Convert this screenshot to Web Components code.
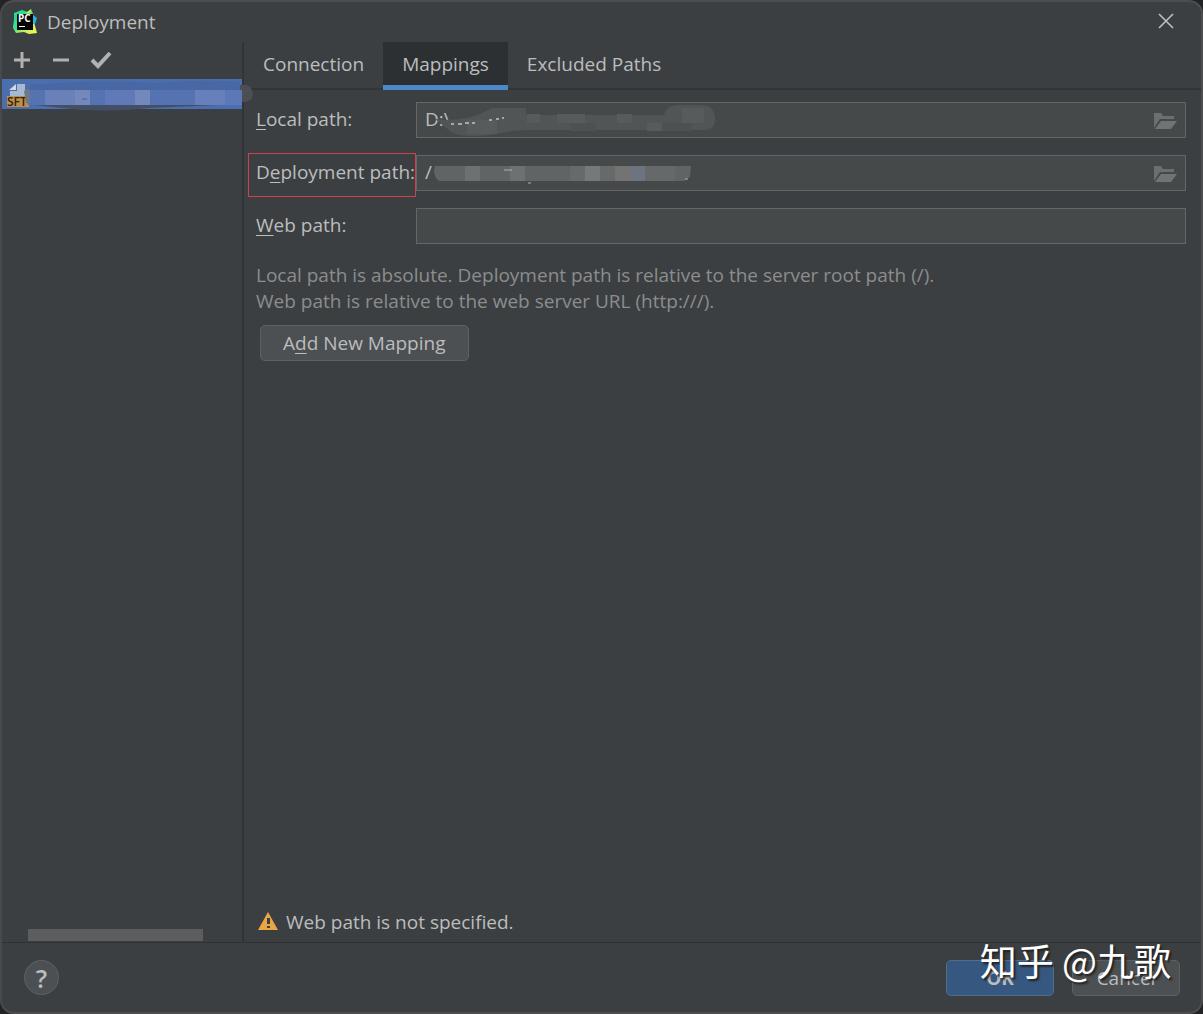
<!DOCTYPE html>
<html lang="en">
<head>
<meta charset="utf-8">
<title>Deployment</title>
<style>
    html, body {
        margin: 0;
        height: 100%;
    }
    body {
        --bg: #3c3f41;
        --line: #323537;
        --text: #bbbdbe;
        --field: #45494a;
        --field-border: #646768;
        background: #222324;
        color: var(--text);
        font: 19px/26px "Open Sans", "Noto Sans", "Noto Sans CJK SC", sans-serif;
    }
</style>
</head>
<body>
<dialog-window>
    <span slot="title">Deployment</span>
    <server-list slot="side">
        <server-item></server-item>
    </server-list>
    <tab-strip slot="main">
        <tab-item>Connection</tab-item>
        <tab-item selected>Mappings</tab-item>
        <tab-item>Excluded Paths</tab-item>
    </tab-strip>
    <mapping-form slot="main"></mapping-form>
    <help-button slot="footer"></help-button>
    <push-button slot="footer" class="end" primary>OK</push-button>
    <push-button slot="footer">Cancel</push-button>
    <page-mark slot="over">知乎 @九歌</page-mark>
</dialog-window>

<script>
class BaseElement extends HTMLElement {
    constructor() {
        super();
        const template = document.createElement('template');
        template.innerHTML = this.constructor.template;
        this.attachShadow({mode: 'open', delegatesFocus: true})
            .appendChild(template.content.cloneNode(true));
    }
}

class DialogWindow extends BaseElement {
    static template = `
        <style>
            :host {
                display: grid;
                grid-template-columns: 242px 1fr;
                grid-template-rows: 40px 1fr auto;
                position: relative;
                box-sizing: border-box;
                min-height: 100%;
                border: 2px solid #4b4d4f;
                border-left-color: #474a4c;
                border-radius: 14px;
                background: var(--bg);
                overflow: hidden;
            }
            header {
                grid-column: 1 / -1;
                display: flex;
                align-items: center;
                gap: 8px;
                padding: 0 25px 0 10px;
            }
            .logo { width: 27px; height: 27px; }
            .close {
                margin-left: auto;
                width: 20px;
                height: 20px;
                padding: 0;
                border: 0;
                background: none;
            }
            .close svg { display: block; }
            aside {
                display: flex;
                flex-direction: column;
                box-sizing: border-box;
                border-right: 2px solid var(--line);
            }
            main {
                display: flex;
                flex-direction: column;
                min-width: 0;
            }
            footer {
                grid-column: 1 / -1;
                display: flex;
                align-items: center;
                gap: 18px;
                padding: 0 21px 0 22px;
                height: 69px;
                border-top: 1px solid #2f3133;
            }
            ::slotted(.end) { margin-left: auto; }
        </style>
        <header>
            <svg class="logo" viewBox="0 0 27 27" aria-hidden="true">
                <defs>
                    <linearGradient id="g" x1="0" y1="0" x2="1" y2="1">
                        <stop offset=".3" stop-color="#2bd98e"/>
                        <stop offset=".7" stop-color="#c8ee5a"/>
                        <stop offset="1" stop-color="#fcf84a"/>
                    </linearGradient>
                </defs>
                <path d="M2 4l8-3 6 2 3-3 2 5 1 8 3 11-8 1-5-2-8 1-3-5 1-9z" fill="url(#g)"/>
                <path d="M18 4l1-4-5 4z" fill="#d9f05a"/>
                <path d="M21 6l4 3-2 6h-3z" fill="#25b5e5"/>
                <path d="M1 19l2-9 3 12z" fill="#3ddc97"/>
                <path d="M5 5h16v16H5z" fill="#050505"/>
                <text x="6" y="13" font-size="10" font-weight="700" fill="#fff" font-family="Open Sans, sans-serif">PC</text>
                <path d="M7 17h6v1H7z" fill="#fff"/>
            </svg>
            <slot name="title"></slot>
            <button class="close" aria-label="Close">
                <svg width="20" height="20" viewBox="0 0 20 20"><path d="M3 2l14 14M17 2 3 16" stroke="#bcbebf" stroke-width="1.6"/></svg>
            </button>
        </header>
        <aside><slot name="side"></slot></aside>
        <main><slot name="main"></slot></main>
        <footer><slot name="footer"></slot></footer>
        <slot name="over"></slot>`;
}

class ServerList extends BaseElement {
    static template = `
        <style>
            :host {
                display: flex;
                flex-direction: column;
                flex: 1;
            }
            nav {
                display: flex;
                gap: 20px;
                height: 37px;
                padding: 0 0 2px 10px;
                box-sizing: border-box;
                align-items: center;
            }
            button {
                width: 20px;
                height: 20px;
                padding: 0;
                border: 0;
                background: none;
            }
            svg { display: block; overflow: visible; }
            .bar {
                margin: auto 0 1px 26px;
                width: 175px;
                height: 12px;
                background: #5c5d5e;
            }
        </style>
        <nav>
            <button aria-label="Add"><svg width="20" height="20"><path d="M10 2v16M2 10h16" stroke="#afb1b3" stroke-width="3"/></svg></button>
            <button aria-label="Remove"><svg width="20" height="20"><path d="M1 10h16" stroke="#afb1b3" stroke-width="3"/></svg></button>
            <button aria-label="Use as default"><svg width="20" height="20"><path d="M0 10l6 6L18 3" fill="none" stroke="#afb1b3" stroke-width="4"/></svg></button>
        </nav>
        <slot></slot>
        <div class="bar"></div>`;
}

class ServerItem extends BaseElement {
    static template = `
        <style>
            :host {
                display: block;
                position: relative;
                height: 30px;
                background: #4b6eaf;
            }
            svg {
                position: absolute;
                left: 0;
                top: 0;
                z-index: 1;
            }
        </style>
        <svg width="256" height="34" role="img" aria-label="SFTP server">
            <path d="M15 5h8v12H8v-5h7z" fill="#a9b9d2"/>
            <path d="M7 11l7-6v6z" fill="#d0d9e6"/>
            <path d="M5 17h22v11H5z" fill="#c08f45"/>
            <text x="5" y="27" font-size="12" font-weight="600" fill="#2c2418" font-family="Open Sans, sans-serif">SFT</text>
            <path d="M238 6q12-2 13 9 0 9-13 8z" fill="#4b4e52"/>
            <path d="M28 6q70-6 130-2 40-4 80-1v8H26z" fill="#4967a2"/>
            <path d="M26 11q-4 7 0 15h214V11z" fill="#5673b1"/>
            <path d="M22 12q5-4 6 0v12h-4z" fill="#6e7887"/>
            <path d="M43 11h45v15H43z" fill="#6980b9"/>
            <path d="M73 11h15v15H73z" fill="#7488bb"/>
            <path d="M103 11h30v15h-30z" fill="#5f7ab7"/>
            <path d="M133 11h15v15h-15z" fill="#7389bd"/>
            <path d="M193 11h30v15h-30z" fill="#6780bb"/>
            <path d="M223 11h17v15h-17z" fill="#5d78b7"/>
            <path d="M32 26h186l-70 3q-48 5-88 0z" fill="#434f66"/>
            <path d="M80 20h5" stroke="#435f9b"/>
            <path d="M95 22h10" stroke="#4e79c6"/>
        </svg>`;
}

class TabStrip extends BaseElement {
    static template = `
        <style>
            :host {
                display: flex;
                box-shadow: inset 0 -2px var(--line);
            }
        </style>
        <slot></slot>`;
}

class TabItem extends BaseElement {
    static template = `
        <style>
            :host { display: block; }
            button {
                height: 48px;
                padding: 0 19px;
                border: 0;
                border-bottom: 5px solid transparent;
                background: none;
                color: inherit;
                font: inherit;
            }
            :host([selected]) button {
                background: #2d3032;
                border-bottom-color: #4a88c7;
            }
        </style>
        <button role="tab"><slot></slot></button>`;
}

class PathField extends BaseElement {
    static template = `
        <style>
            :host {
                display: grid;
                grid-template-columns: 160px 1fr;
                align-items: center;
                position: relative;
            }
            :host([marked])::before {
                content: "";
                position: absolute;
                left: -8px;
                top: -2px;
                width: 166px;
                height: 42px;
                border: 1px solid #d0424a;
                z-index: 1;
            }
            label {
                padding-bottom: 2px;
                white-space: nowrap;
            }
            .box {
                display: flex;
                align-items: center;
                position: relative;
                box-sizing: border-box;
                height: 36px;
                padding: 0 8px;
                border: 1px solid var(--field-border);
                background: var(--field);
            }
            input {
                flex: 1;
                min-width: 0;
                padding: 0 0 2px;
                border: 0;
                outline: 0;
                background: none;
                color: inherit;
                font: inherit;
            }
            button {
                padding: 0;
                border: 0;
                background: none;
            }
            button svg { display: block; }
            :host([plain]) button { display: none; }
            ::slotted(svg) {
                position: absolute;
                left: 0;
                top: 0;
                pointer-events: none;
            }
        </style>
        <label for="path"><slot name="label"></slot></label>
        <div class="box">
            <input id="path" type="text" spellcheck="false">
            <slot></slot>
            <button aria-label="Browse">
                <svg width="24" height="20"><path d="M1 3h7l2 3h11v3H7L1 18z" fill="#6b6f71"/><path d="M7 10h17l-6 9H1z" fill="#45494a"/><path d="M8 11h16l-6 8H2z" fill="#707475"/></svg>
            </button>
        </div>`;

    connectedCallback() {
        this.shadowRoot.getElementById('path').value = this.getAttribute('value') || '';
    }
}

class MappingForm extends BaseElement {
    static template = `
        <style>
            :host {
                display: flex;
                flex-direction: column;
                flex: 1;
                padding: 12px 15px 7px 12px;
            }
            .fields {
                display: grid;
                gap: 17px;
            }
            u { text-underline-offset: 3px; }
            .hint {
                margin: 18px 0 11px;
                color: #8b8d8e;
            }
            push-button {
                align-self: flex-start;
                margin-left: 4px;
            }
            .status {
                display: flex;
                align-items: center;
                gap: 7px;
                margin: auto 0 0 1px;
            }
        </style>
        <div class="fields">
            <path-field value="D:\\">
                <span slot="label"><u>L</u>ocal path:</span>
                <svg width="310" height="36">
                    <path d="M18 16q25 3 45-5l12-6h34v7h138q3-10 14-10h22q15 0 15 14 0 11-10 11H110q-12 0-20 2-40 8-56 0z" fill="#515556"/>
                    <path d="M50 17h30v14H50zM110 11h13v9h-13zM140 11h28v9h-28zM200 11h15v9h-15zM230 20h15v8h-15zM265 5h22v15h-22z" fill="#575b5c"/>
                    <path d="M154 20h25v8h-25zM245 20h30v8h-30z" fill="#4d5152"/>
                    <path d="M34 21h3m4 0h4m3-1h4m3 0h3m14-3h3m4-1h3m3-1h2" stroke="#a5a8a9" stroke-width="2"/>
                </svg>
            </path-field>
            <path-field value="/" marked>
                <span slot="label">D<u>e</u>ployment path:</span>
                <svg width="290" height="36">
                    <path d="M18 10h256l-1 11-6 4H22q-7-5-4-15z" fill="#606465"/>
                    <path d="M48 10h15v15H48zM93 10h15v15H93z" fill="#6d7173"/>
                    <path d="M153 10h15v15h-15zM183 10h15v15h-15z" fill="#676a6b"/>
                    <path d="M168 10h15v15h-15z" fill="#76797a"/>
                    <path d="M198 10h15v15h-15z" fill="#737472"/>
                    <path d="M213 10h15v15h-15z" fill="#6c7480"/>
                    <path d="M228 10h30v15h-30z" fill="#66696a"/>
                    <path d="M87 14h8m16 13h3m154-4h3" stroke="#b0b2b3"/>
                </svg>
            </path-field>
            <path-field plain>
                <span slot="label"><u>W</u>eb path:</span>
            </path-field>
        </div>
        <div class="hint">Local path is absolute. Deployment path is relative to the server root path (/).<br>Web path is relative to the web server URL (http:///).</div>
        <push-button>A<u>d</u>d New Mapping</push-button>
        <div class="status">
            <svg width="22" height="20" aria-hidden="true"><path d="M11 0l10 18H1z" fill="#e9a743"/><path d="M10 6h3v6h-3zM10 14h3v2h-3z" fill="#3c3f41"/></svg>
            <span>Web path is not specified.</span>
        </div>`;
}

class PushButton extends BaseElement {
    static template = `
        <style>
            :host { display: block; }
            button {
                display: block;
                min-width: 108px;
                height: 36px;
                padding: 0 22px;
                border: 1px solid #5e6162;
                border-radius: 5px;
                background: #4c5052;
                color: inherit;
                font: inherit;
            }
            :host([primary]) button {
                border-color: #4c708c;
                background: #365880;
                font-weight: 700;
            }
        </style>
        <button><slot></slot></button>`;
}

class HelpButton extends BaseElement {
    static template = `
        <style>
            :host { display: block; }
            button {
                display: block;
                width: 35px;
                height: 35px;
                padding: 0;
                border: 1px solid #5e6162;
                border-radius: 50%;
                background: #4c5052;
                color: inherit;
                font: 600 25px/32px "Open Sans", sans-serif;
            }
        </style>
        <button aria-label="Help">?</button>`;
}

class PageMark extends BaseElement {
    static template = `
        <style>
            :host {
                position: absolute;
                right: 30px;
                bottom: 26px;
                color: #fff;
                font: 37px/52px "Noto Sans CJK SC", sans-serif;
                text-shadow: 2px 2px 2px #222;
                pointer-events: none;
            }
        </style>
        <slot></slot>`;
}

customElements.define('dialog-window', DialogWindow);
customElements.define('server-list', ServerList);
customElements.define('server-item', ServerItem);
customElements.define('tab-strip', TabStrip);
customElements.define('tab-item', TabItem);
customElements.define('path-field', PathField);
customElements.define('push-button', PushButton);
customElements.define('mapping-form', MappingForm);
customElements.define('help-button', HelpButton);
customElements.define('page-mark', PageMark);
</script>
</body>
</html>
